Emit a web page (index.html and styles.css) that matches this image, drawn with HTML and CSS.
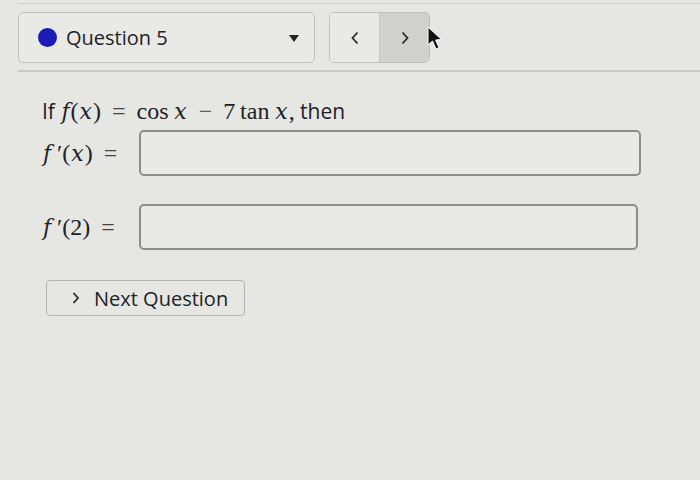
FILE: index.html
```html
<!DOCTYPE html>
<html>
<head>
<meta charset="utf-8">
<title>Question 5</title>
<link rel="stylesheet" href="styles.css">
</head>
<body>
<div class="topline"></div>
<div class="header">
  <div class="qselect">
    <span class="dot"></span>
    <span class="qname">Question 5</span>
    <span class="caret"></span>
  </div>
  <div class="qnav">
    <span class="prev">
      <svg width="10" height="14" viewBox="0 0 10 14"><path d="M7.5 1.5 L2.5 7 L7.5 12.5" fill="none" stroke="#2b2b30" stroke-width="1.8"/></svg>
    </span>
    <span class="next">
      <svg width="10" height="14" viewBox="0 0 10 14"><path d="M2.5 1.5 L7.5 7 L2.5 12.5" fill="none" stroke="#2b2b30" stroke-width="1.8"/></svg>
    </span>
  </div>
  <svg class="cursor" width="20" height="26" viewBox="0 0 20 26"><path d="M2 1 L2 19 L6.5 15 L10 23 L13 21.6 L9.6 14 L15.5 13.5 Z" fill="#111" stroke="#fff" stroke-width="1"/></svg>
</div>
<div class="content">
  <p class="prompt">If <span class="m"><i>f</i>(<i>x</i>)<span class="op">=</span>cos&thinsp;<i>x</i><span class="op">&minus;</span>7&thinsp;tan&thinsp;<i>x</i>,</span> then</p>
  <div class="row">
    <span class="lbl m"><i>f</i>&thinsp;&prime;(<i>x</i>)<span class="op">=</span></span>
    <span class="answer wide"></span>
  </div>
  <div class="row second">
    <span class="lbl m"><i>f</i>&thinsp;&prime;(2)<span class="op">=</span></span>
    <span class="answer"></span>
  </div>
  <div class="nextq">
    <svg width="10" height="14" viewBox="0 0 10 14"><path d="M2.5 2 L7 7 L2.5 12" fill="none" stroke="#2b2b30" stroke-width="1.8"/></svg>
    <span>Next Question</span>
  </div>
</div>
</body>
</html>
```

FILE: styles.css
```css
body {
	margin:0;
	background:#e6e6e3;
	font-family:"Open Sans", "Noto Sans", Arial, sans-serif;
	color:#222226;
	height:480px;
	overflow:hidden;
}
.topline {
	height:3px;
	border-bottom:1px solid #cfcfcc;
	margin-left:18px;
}
.header {
	position:relative;
	display:flex;
	margin:8px 0 0 18px;
	padding-bottom:7px;
	border-bottom:2px solid #c9c9c6;
}
.qselect {
	width:295px;
	height:49px;
	border:1px solid #c0c0bd;
	border-radius:5px;
	background:#e9e9e6;
	display:flex;
	align-items:center;
}
.dot {
	width:19px;
	height:19px;
	border-radius:50%;
	background:#1b1bb5;
	margin-left:19px;
}
.qname {
	margin-left:9px;
	font-size:20px;
	flex:1;
}
.caret {
	width:0;
	height:0;
	border-left:5px solid transparent;
	border-right:5px solid transparent;
	border-top:7px solid #222;
	margin-right:15px;
	margin-top:2px;
}
.qnav {
	margin-left:14px;
	width:99px;
	height:49px;
	border:1px solid #c0c0bd;
	border-radius:5px;
	display:flex;
	overflow:hidden;
}
.qnav span {
	flex:1;
	display:flex;
	align-items:center;
	justify-content:center;
}
.prev {
	background:#e9e9e6;
	border-right:1px solid #c6c6c3;
}
.next {
	background:#d0d0cd;
}
.cursor {
	position:absolute;
	left:408px;
	top:14px;
}
.content {
	padding:24px 0 0 42px;
}
.prompt {
	margin:0;
	font-size:21px;
	line-height:30px;
}
.m {
	font-family:"Liberation Serif", "DejaVu Serif", serif;
	font-size:24px;
}
.m i {
	font-family:"DejaVu Serif", "Liberation Serif", serif;
	font-size:22px;
	margin:0 1px;
}
.op {
	color:#444;
	margin:0 11px;
}
.row {
	display:flex;
	align-items:center;
	margin-top:3px;
}
.row.second {
	margin-top:28px;
}
.lbl {
	width:97px;
}
.answer {
	width:495px;
	height:42px;
	border:2px solid #8d8d8b;
	border-radius:5px;
	background:#e9e9e6;
}
.answer.wide {
	width:498px;
}
.nextq {
	margin:30px 0 0 4px;
	width:197px;
	height:34px;
	border:1px solid #b3b3b0;
	border-radius:4px;
	display:flex;
	align-items:center;
	font-size:20px;
}
.nextq svg {
	margin:0 13px 0 24px;
}
```
